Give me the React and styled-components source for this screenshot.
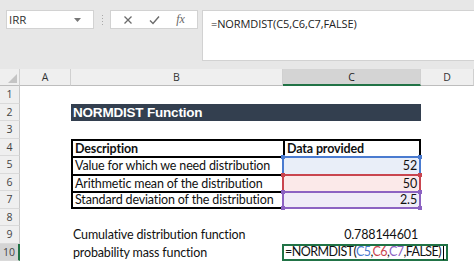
import React from 'react'
import styled, { createGlobalStyle } from 'styled-components'

const GlobalStyle = createGlobalStyle`
  html, body {
    margin: 0;
    padding: 0;
    background: #ffffff;
  }
  * {
    box-sizing: border-box;
  }
`

const Window = styled.div`
  width: 474px;
  height: 261px;
  overflow: hidden;
  background: #e7e7e7;
  font-family: 'Open Sans', 'Liberation Sans', sans-serif;
`

const Toolbar = styled.div`
  height: 69px;
  display: flex;
  align-items: flex-start;
  padding: 10px 0 0 6px;
`

const NameBox = styled.div`
  width: 88px;
  height: 19px;
  background: #fff;
  border: 1px solid #d2d2d2;
  display: flex;
  align-items: center;
  justify-content: space-between;
  padding: 0 12px 0 2px;
  font-size: 11.5px;
  color: #333;
`

const Grip = styled.div`
  width: 16px;
  height: 19px;
  display: flex;
  flex-direction: column;
  align-items: center;
  justify-content: center;
  gap: 2px;

  span {
    width: 1px;
    height: 1px;
    background: #a8a8a8;
  }
`

const FxButtons = styled.div`
  width: 88px;
  height: 19px;
  background: #fff;
  border: 1px solid #d2d2d2;
  display: flex;
  align-items: center;
  justify-content: space-around;
  padding: 0 4px;
`

const FxLabel = styled.span`
  font-family: 'Liberation Serif', serif;
  font-style: italic;
  font-size: 12px;
  color: #666;
`

const FormulaBar = styled.div`
  flex: 1;
  height: 51px;
  margin-left: 4px;
  background: #fff;
  border-left: 1px solid #d2d2d2;
  border-top: 1px solid #d2d2d2;
  border-bottom: 1px solid #d2d2d2;
  padding: 5px 0 0 8px;
  font-size: 11px;
  color: #222;
  letter-spacing: -0.1px;
`

const Sheet = styled.div`
  display: grid;
  grid-template-columns: 20px 51px 212px 138px 1fr;
  grid-template-rows: 17px repeat(10, 17.5px);
  background: #fff;
  font-family: 'Lato', 'Liberation Sans', sans-serif;
  font-size: 12.5px;
  letter-spacing: -0.15px;
  color: #111;
`

const Corner = styled.div`
  background: #efefef;
  border-right: 1px solid #cfcfcf;
  border-bottom: 1px solid #bdbdbd;
  position: relative;

  &::after {
    content: '';
    position: absolute;
    right: 2px;
    bottom: 2px;
    border-left: 9px solid transparent;
    border-bottom: 9px solid #c4c4c4;
  }
`

const ColHead = styled.div`
  background: ${p => (p.$active ? '#d4d4d4' : '#efefef')};
  border-right: 1px solid #d0d0d0;
  border-bottom: ${p => (p.$active ? '2px solid #217346' : '1px solid #bdbdbd')};
  display: flex;
  align-items: center;
  justify-content: center;
  font-family: 'Open Sans', 'Liberation Sans', sans-serif;
  font-size: 10.5px;
  letter-spacing: 0;
  color: ${p => (p.$active ? '#222' : '#333')};
`

const RowHead = styled.div`
  background: ${p => (p.$active ? '#d4d4d4' : '#efefef')};
  border-bottom: 1px solid #dadada;
  border-right: ${p => (p.$active ? '2px solid #217346' : '1px solid #c8c8c8')};
  display: flex;
  align-items: center;
  justify-content: center;
  font-family: 'Open Sans', 'Liberation Sans', sans-serif;
  font-size: 10.5px;
  letter-spacing: 0;
  color: #444;
`

const Cell = styled.div`
  position: relative;
  display: flex;
  align-items: center;
  justify-content: ${p => (p.$right ? 'flex-end' : 'flex-start')};
  padding: 0 3px 0 2px;
  white-space: nowrap;
  font-weight: ${p => (p.$bold ? 700 : 400)};
`

const TitleCell = styled.div`
  grid-column: 3 / span 2;
  background: #333f4f;
  color: #fff;
  display: flex;
  align-items: center;
  padding-left: 2px;
  font-family: 'Liberation Sans', Arial, sans-serif;
  font-weight: 700;
  font-size: 13.5px;
  letter-spacing: -0.2px;
`

const TableCell = styled(Cell)`
  border-left: 2px solid #000;
  border-top: 2px solid #000;
  border-right: ${p => (p.$edge ? '2px solid #000' : '0')};
  border-bottom: ${p => (p.$last ? '2px solid #000' : '0')};
`

const RefCell = styled(Cell)`
  background: ${p => p.$fill};
  border: 2px solid ${p => p.$color};
  border-bottom: ${p => (p.$last ? `2px solid ${p.$color}` : '0')};
  margin-left: -1px;
  padding-right: 2px;
`

const Handle = styled.i`
  position: absolute;
  width: 4px;
  height: 4px;
  background: ${p => p.$color};
  ${p => (p.$bottom ? 'bottom: -3px;' : 'top: -3px;')}
  ${p => (p.$rightSide ? 'right: -3px;' : 'left: -3px;')}
`

const EditCell = styled.div`
  display: flex;
  align-items: stretch;
  margin-left: -1px;
  overflow: visible;
  z-index: 2;
`

const EditBox = styled.div`
  flex-shrink: 0;
  min-width: 100%;
  width: max-content;
  background: #fff;
  border: 2px solid #217346;
  display: flex;
  align-items: center;
  padding: 0 2px 0 1px;
  white-space: nowrap;
  letter-spacing: -0.55px;
`

const Ref = styled.span`
  color: ${p => p.$color};
`

const Caret = styled.span`
  display: inline-block;
  width: 1px;
  height: 14px;
  background: #000;
  margin-left: 2px;
  vertical-align: middle;
`

const Empty = styled.div``

const refs = {
  blue: { color: '#4a7bd0', fill: '#e9eef8' },
  red: { color: '#c9454f', fill: '#fbe9e9' },
  purple: { color: '#8c62c2', fill: '#efebf7' },
}

const CrossIcon = () => (
  <svg width="10" height="10" viewBox="0 0 10 10">
    <path d="M1.5 1.5 L8.5 8.5 M8.5 1.5 L1.5 8.5" stroke="#6b6b6b" strokeWidth="1.3" fill="none" />
  </svg>
)

const CheckIcon = () => (
  <svg width="11" height="10" viewBox="0 0 11 10">
    <path d="M1 5.5 L4 8.5 L10 1.5" stroke="#6b6b6b" strokeWidth="1.4" fill="none" />
  </svg>
)

const CaretDown = () => (
  <svg width="7" height="4" viewBox="0 0 7 4">
    <path d="M0 0 L7 0 L3.5 4 Z" fill="#777" />
  </svg>
)

const RefBox = ({ kind, last, children }) => {
  const r = refs[kind]
  return (
    <RefCell $right $fill={r.fill} $color={r.color} $last={last}>
      {children}
      <Handle $color={r.color} />
      <Handle $color={r.color} $rightSide />
      {last && <Handle $color={r.color} $bottom />}
      {last && <Handle $color={r.color} $bottom $rightSide />}
    </RefCell>
  )
}

export default function App() {
  return (
    <Window>
      <GlobalStyle />
      <Toolbar>
        <NameBox>
          <span>IRR</span>
          <CaretDown />
        </NameBox>
        <Grip>
          <span />
          <span />
          <span />
          <span />
        </Grip>
        <FxButtons>
          <CrossIcon />
          <CheckIcon />
          <FxLabel>fx</FxLabel>
        </FxButtons>
        <FormulaBar>=NORMDIST(C5,C6,C7,FALSE)</FormulaBar>
      </Toolbar>

      <Sheet>
        <Corner />
        <ColHead>A</ColHead>
        <ColHead>B</ColHead>
        <ColHead $active>C</ColHead>
        <ColHead>D</ColHead>

        <RowHead>1</RowHead>
        <Empty />
        <Empty />
        <Empty />
        <Empty />

        <RowHead>2</RowHead>
        <Empty />
        <TitleCell>NORMDIST Function</TitleCell>
        <Empty />

        <RowHead>3</RowHead>
        <Empty />
        <Empty />
        <Empty />
        <Empty />

        <RowHead>4</RowHead>
        <Empty />
        <TableCell $bold>Description</TableCell>
        <TableCell $bold $edge>Data provided</TableCell>
        <Empty />

        <RowHead>5</RowHead>
        <Empty />
        <TableCell>Value for which we need distribution</TableCell>
        <RefBox kind="blue">52</RefBox>
        <Empty />

        <RowHead>6</RowHead>
        <Empty />
        <TableCell>Arithmetic mean of the distribution</TableCell>
        <RefBox kind="red">50</RefBox>
        <Empty />

        <RowHead>7</RowHead>
        <Empty />
        <TableCell $last>Standard deviation of the distribution</TableCell>
        <RefBox kind="purple" last>2.5</RefBox>
        <Empty />

        <RowHead>8</RowHead>
        <Empty />
        <Empty />
        <Empty />
        <Empty />

        <RowHead>9</RowHead>
        <Empty />
        <Cell>Cumulative distribution function</Cell>
        <Cell $right>0.788144601</Cell>
        <Empty />

        <RowHead $active>10</RowHead>
        <Empty />
        <Cell>probability mass function</Cell>
        <EditCell>
          <EditBox>
            <span>
              =NORMDIST(<Ref $color={refs.blue.color}>C5</Ref>,<Ref $color={refs.red.color}>C6</Ref>,<Ref $color={refs.purple.color}>C7</Ref>,FALSE)<Caret />
            </span>
          </EditBox>
        </EditCell>
        <Empty />
      </Sheet>
    </Window>
  )
}
